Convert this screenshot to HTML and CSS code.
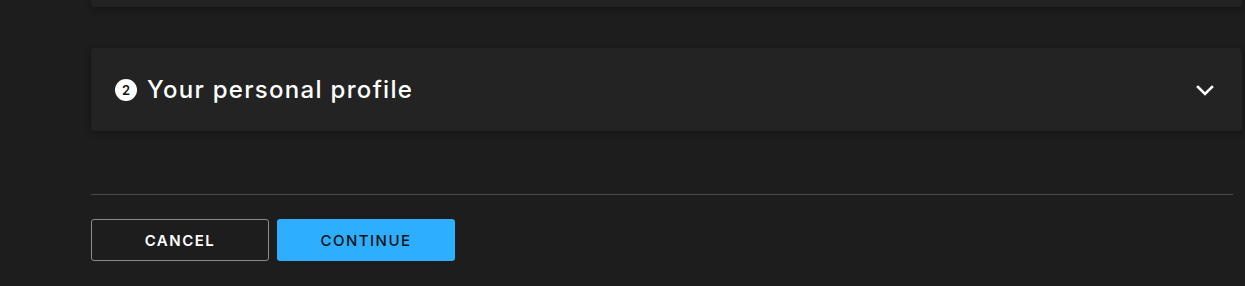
FILE: index.html
```html
<!DOCTYPE html>
<html>
<head>
<meta charset="utf-8">
<link rel="stylesheet" href="styles.css">
</head>
<body>
<div class="page">
  <div class="card card-top"></div>
  <div class="card card-section">
    <div class="section-title">
      <span class="step">2</span>
      <span class="title-text">Your personal profile</span>
    </div>
    <svg class="chevron" width="18" height="12" viewBox="0 0 18 12">
      <path d="M2 3 L9 10 L16 3" fill="none" stroke="#ffffff" stroke-width="2.6" stroke-linecap="square"/>
    </svg>
  </div>
  <div class="divider"></div>
  <div class="actions">
    <button class="btn btn-cancel">CANCEL</button>
    <button class="btn btn-continue">CONTINUE</button>
  </div>
</div>
</body>
</html>
```
FILE: styles.css
```css
html, body {
  margin: 0;
  padding: 0;
  background: #1d1d1d;
  font-family: "Inter", "Liberation Sans", sans-serif;
  overflow: hidden;
}
.page {
  padding-left: 91px;
  padding-right: 3px;
  display: flex;
  flex-direction: column;
}
.card {
  background: #232323;
  border-radius: 4px;
  box-shadow: 0 2px 6px rgba(0,0,0,0.35);
}
.card-top {
  height: 7px;
  border-top-left-radius: 0;
  border-top-right-radius: 0;
}
.card-section {
  margin-top: 41px;
  height: 83px;
  display: flex;
  align-items: center;
  justify-content: space-between;
  padding: 0 28px 0 24px;
}
.section-title {
  display: flex;
  align-items: center;
  gap: 10px;
}
.step {
  width: 22px;
  height: 22px;
  border-radius: 50%;
  background: #ffffff;
  color: #111;
  font-size: 13px;
  font-weight: 600;
  display: flex;
  align-items: center;
  justify-content: center;
  margin-top: 1px;
}
.title-text {
  color: #ffffff;
  font-size: 24px;
  font-weight: 500;
  letter-spacing: 1.3px;
}
.chevron {
  display: block;
}
.divider {
  margin-top: 63px;
  height: 1px;
  background: #4a4a4a;
  margin-right: 9px;
}
.actions {
  margin-top: 24px;
  display: flex;
  gap: 8px;
}
.btn {
  width: 178px;
  height: 42px;
  border-radius: 3px;
  font-family: "Inter", "Liberation Sans", sans-serif;
  font-size: 15px;
  letter-spacing: 1.5px;
  cursor: pointer;
}
.btn-cancel {
  background: transparent;
  border: 1px solid #8a8a8a;
  color: #ffffff;
  font-weight: 600;
}
.btn-continue {
  background: #2daeff;
  border: none;
  color: #111;
  font-weight: 500;
}
```
